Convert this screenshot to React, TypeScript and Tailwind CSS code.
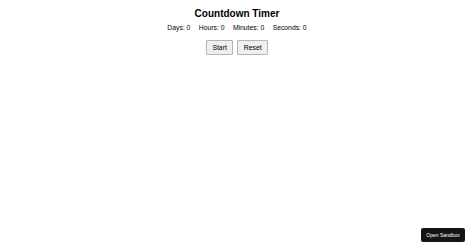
export default function App() {
  return (
    <div className="relative h-[248px] w-full bg-white text-black font-['Liberation_Sans',Arial,sans-serif]">
      <div className="flex flex-col items-center pt-[8px]">
        {/* Title */}
        <h2 className="text-[10px] leading-[12px] font-bold">Countdown Timer</h2>

        {/* Time parts */}
        <div className="mt-[4px] flex gap-[8.4px] text-[6.8px] leading-[8px]">
          <span>Days: 0</span>
          <span>Hours: 0</span>
          <span>Minutes: 0</span>
          <span>Seconds: 0</span>
        </div>

        {/* Controls */}
        <div className="mt-[8px] flex gap-[4px]">
          <button className="h-[15px] px-[5.5px] flex items-center bg-[#efefef] border border-[#b5b5b5] rounded-[1px] text-[6.8px] leading-[8px]">
            Start
          </button>
          <button className="h-[15px] px-[5.5px] flex items-center bg-[#efefef] border border-[#b5b5b5] rounded-[1px] text-[6.8px] leading-[8px]">
            Reset
          </button>
        </div>
      </div>

      {/* Sandbox link */}
      <div className="absolute right-[9px] bottom-[6px] h-[14px] w-[44px] flex items-center justify-center rounded-[2px] bg-[#151515] text-white text-[5px] leading-[6px]">
        Open Sandbox
      </div>
    </div>
  );
}
